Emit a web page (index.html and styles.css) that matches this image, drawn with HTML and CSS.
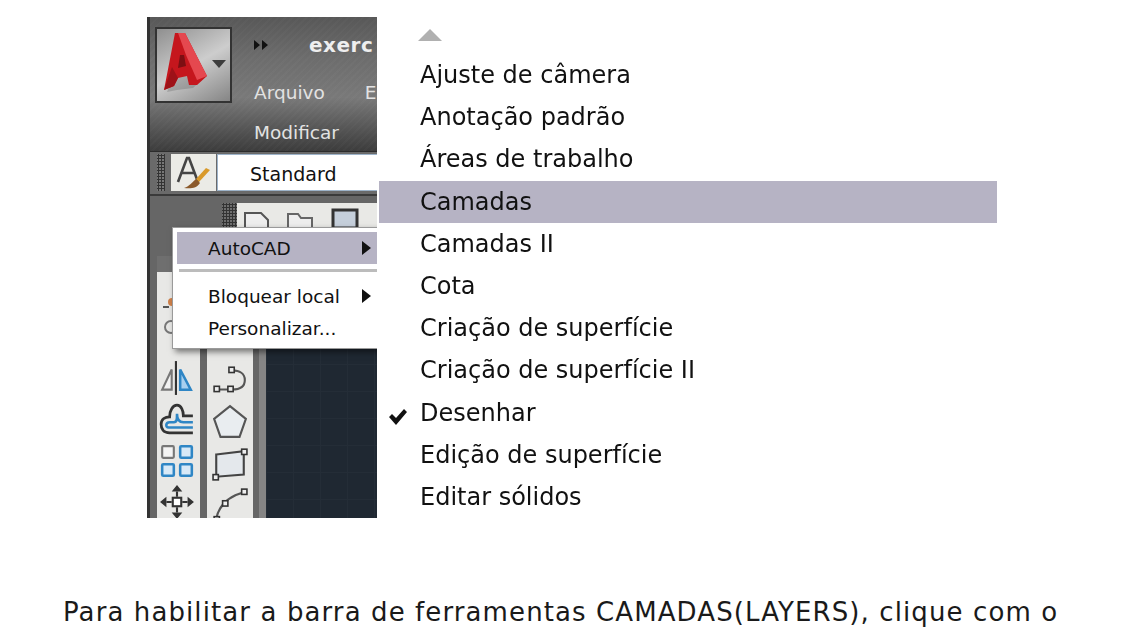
FILE: index.html
```html
<!DOCTYPE html>
<html>
<head>
    <title>Camadas</title>
    <link rel="stylesheet" href="styles.css">
</head>
<body>
    <div class="figure">
        <div class="cad">
            <div class="cad-head">
                <div class="logo-btn">
                    <svg width="73" height="72" viewBox="0 0 73 72">
                        <path d="M10 63 L22 34 L46 50 L36 59 L20 61 Z" fill="#000" opacity=".15"/>
                        <path d="M18 4 L28 4 L50 47 L40 56 L32 56 L30 47 L21 49 L17 57 L7 61 Z" fill="#c5161d"/>
                        <path d="M21 4 L28 4 L50 47 L40 51 L29 26 Z" fill="#e5484f"/>
                        <path d="M7 61 L17 57 L21 49 L15 38 Z" fill="#9e1218"/>
                        <path d="M23 26 L27 26 L29 37 L21 39 Z" fill="#7d0f13"/>
                        <path d="M55 31 L69 31 L62 39 Z" fill="#3d3d3d"/>
                    </svg>
                </div>
                <div class="head-right">
                    <div class="title-row">
                        <svg class="ffwd" width="14" height="10" viewBox="0 0 14 10"><path d="M0 0 L6 5 L0 10 Z M8 0 L14 5 L8 10 Z" fill="#111"/></svg>
                        <span class="doc-name">exerc</span>
                    </div>
                    <div class="head-menu">
                        <span class="head-item">Arquivo</span>
                        <span class="head-item">E</span>
                    </div>
                    <div class="head-menu"><span class="head-item">Modificar</span></div>
                </div>
            </div>

            <div class="style-bar">
                <div class="grip"></div>
                <div class="style-icon">
                    <svg width="38" height="36" viewBox="0 0 38 36">
                        <path d="M3 27 L12 3 L14 3 L23 27 M7 18 L19 18" fill="none" stroke="#444" stroke-width="2.6"/>
                        <path d="M31 13 L35 15 L24 27 L21 24 Z" fill="#d99a2b"/>
                        <path d="M21 24 L25 28 C22 33 16 34 9 33 C15 31 17 27 21 24 Z" fill="#8b5a2b"/>
                    </svg>
                </div>
                <div class="style-combo">Standard</div>
            </div>

            <div class="tool-area">
                <div class="top-toolbar">
                    <div class="grip grip-small"></div>
                    <svg width="140" height="26" viewBox="0 0 140 26">
                        <path d="M8 24 V10 H24 L31 17 V24" fill="#eee" stroke="#555" stroke-width="2"/>
                        <path d="M51 24 V11 H61 L64 15 H75 V24" fill="#eee" stroke="#666" stroke-width="2"/>
                        <rect x="96" y="7" width="24" height="18" fill="#c5cfdb" stroke="#333" stroke-width="3"/>
                    </svg>
                </div>
                <div class="tool-cols">
                    <div class="tool-col col-a">
                        <div class="grip-head"></div>
                        <div class="peek-icons">
                            <svg width="14" height="70" viewBox="0 0 14 70">
                                <path d="M1 35 H7" stroke="#555" stroke-width="2"/>
                                <circle cx="10" cy="30" r="4" fill="#d0814a"/>
                                <circle cx="9" cy="55" r="6" fill="none" stroke="#777" stroke-width="2"/>
                            </svg>
                        </div>
                        <div class="tool-icon">
                            <svg viewBox="0 0 34 34">
                                <path d="M16 1 V33" stroke="#333" stroke-width="2"/>
                                <path d="M12 9 V28 H3 Z" fill="#f2f2f2" stroke="#777" stroke-width="2"/>
                                <path d="M20 9 V28 H30 Z" fill="#a9d0ef" stroke="#2f86c5" stroke-width="2.4"/>
                            </svg>
                        </div>
                        <div class="tool-icon">
                            <svg viewBox="0 0 34 34">
                                <path d="M32 30 H10 C4 30 2 26 2 22 C2 17 6 15 10 15 C10 9 13 4 17 4 C21 4 23 9 23 14 H32" fill="none" stroke="#333" stroke-width="2.6"/>
                                <path d="M32 25 H9 C6 25 6 20 10 20 H14 C17 20 17 17 17 12 C17 17 19 20 23 20 H32" fill="none" stroke="#2f86c5" stroke-width="2.4"/>
                            </svg>
                        </div>
                        <div class="tool-icon">
                            <svg viewBox="0 0 34 34">
                                <rect x="3" y="3" width="11" height="11" rx="1" fill="#f4f4f4" stroke="#777" stroke-width="2"/>
                                <rect x="20" y="3" width="11" height="11" rx="1" fill="#d8e9f7" stroke="#2f86c5" stroke-width="2.4"/>
                                <rect x="3" y="20" width="11" height="11" rx="1" fill="#d8e9f7" stroke="#2f86c5" stroke-width="2.4"/>
                                <rect x="20" y="20" width="11" height="11" rx="1" fill="#d8e9f7" stroke="#2f86c5" stroke-width="2.4"/>
                            </svg>
                        </div>
                        <div class="tool-icon">
                            <svg viewBox="0 0 34 34">
                                <rect x="13" y="13" width="8" height="8" fill="#fff" stroke="#333" stroke-width="2"/>
                                <path d="M17 1 L22 7 H12 Z M17 33 L22 27 H12 Z M1 17 L7 12 V22 Z M33 17 L27 12 V22 Z" fill="#333"/>
                                <path d="M7 17 H12 M22 17 H27 M17 7 V12 M17 22 V27" stroke="#333" stroke-width="2"/>
                            </svg>
                        </div>
                    </div>
                    <div class="tool-col col-b">
                        <div class="tool-icon">
                            <svg viewBox="0 0 34 34">
                                <path d="M5 25 H19 C28 25 31 21 31 16 C31 10 26 7 19 7" fill="none" stroke="#555" stroke-width="2"/>
                                <rect x="2" y="22" width="5" height="5" fill="#eee" stroke="#333" stroke-width="1.5"/>
                                <rect x="15" y="22" width="5" height="5" fill="#eee" stroke="#333" stroke-width="1.5"/>
                                <rect x="16" y="4" width="5" height="5" fill="#eee" stroke="#333" stroke-width="1.5"/>
                            </svg>
                        </div>
                        <div class="tool-icon">
                            <svg viewBox="0 0 34 34">
                                <path d="M17 2 L32 14 L26 31 H8 L2 14 Z" fill="#e9edf0" stroke="#555" stroke-width="2"/>
                            </svg>
                        </div>
                        <div class="tool-icon">
                            <svg viewBox="0 0 34 34">
                                <path d="M4 8 L30 5 V27 L4 29 Z" fill="#e4e8ec" stroke="#444" stroke-width="2"/>
                                <rect x="28" y="3" width="5" height="5" fill="#eee" stroke="#333" stroke-width="1.5"/>
                                <rect x="1" y="27" width="5" height="5" fill="#eee" stroke="#333" stroke-width="1.5"/>
                            </svg>
                        </div>
                        <div class="tool-icon">
                            <svg viewBox="0 0 34 34">
                                <path d="M4 30 C6 20 12 10 30 5" fill="none" stroke="#555" stroke-width="2"/>
                                <rect x="2" y="28" width="5" height="5" fill="#eee" stroke="#333" stroke-width="1.5"/>
                                <rect x="10" y="13" width="5" height="5" fill="#eee" stroke="#333" stroke-width="1.5"/>
                                <rect x="28" y="2" width="5" height="5" fill="#eee" stroke="#333" stroke-width="1.5"/>
                            </svg>
                        </div>
                    </div>
                    <div class="canvas"></div>
                </div>
            </div>

            <div class="context-menu">
                <div class="ctx-item active"><span>AutoCAD</span><i class="arrow"></i></div>
                <div class="ctx-sep"></div>
                <div class="ctx-item"><span>Bloquear local</span><i class="arrow"></i></div>
                <div class="ctx-item"><span>Personalizar...</span></div>
            </div>
        </div>

        <div class="toolbar-list">
            <div class="scroll-up"></div>
            <div class="list-item">Ajuste de câmera</div>
            <div class="list-item">Anotação padrão</div>
            <div class="list-item">Áreas de trabalho</div>
            <div class="list-item selected">Camadas</div>
            <div class="list-item">Camadas II</div>
            <div class="list-item">Cota</div>
            <div class="list-item">Criação de superfície</div>
            <div class="list-item">Criação de superfície II</div>
            <div class="list-item">
                <svg class="check" width="20" height="18" viewBox="0 0 20 18"><path d="M1 9 L4 6 L8 10 L16 1 L19 4 L8 17 Z" fill="#111"/></svg>
                Desenhar
            </div>
            <div class="list-item">Edição de superfície</div>
            <div class="list-item">Editar sólidos</div>
        </div>
    </div>

    <p class="caption">Para habilitar a barra de ferramentas CAMADAS(LAYERS), clique com o</p>
</body>
</html>
```

FILE: styles.css
```css
html, body {
    margin: 0;
    padding: 0;
    height: 630px;
    overflow: hidden;
    background-color: #FFF;
}

body {
    font-family: "DejaVu Sans", Verdana, sans-serif;
    color: #111;
}

.figure {
    display: flex;
    padding: 17px 0 0 147px;
    height: 501px;
    filter: blur(.4px);
}

.cad {
    position: relative;
    width: 230px;
    height: 501px;
    flex-shrink: 0;
    overflow: hidden;
    background-color: #666;
    border-left: 3px solid #333;
    box-sizing: border-box;
}

.cad-head {
    display: flex;
    height: 135px;
    padding: 10px 0 0 5px;
    box-sizing: border-box;
    background:
        repeating-linear-gradient(135deg, rgba(255, 255, 255, .02) 0 2px, transparent 2px 5px),
        linear-gradient(#585858, #6c6c6c 30%, #797979 60%, #3c3c3c);
    border-bottom: 1px solid #2c2c2c;
}

.logo-btn {
    width: 77px;
    height: 76px;
    box-sizing: border-box;
    border: 2px solid #333;
    background: linear-gradient(150deg, #8f8f8f, #cdcdcd 50%, #858585);
}

.head-right {
    margin-left: 22px;
    white-space: nowrap;
    color: #e2e2e2;
    font-size: 18.5px;
}

.title-row {
    display: flex;
    align-items: center;
    height: 36px;
    margin-bottom: 9px;
}

.ffwd {
    margin-right: 41px;
}

.doc-name {
    font-weight: bold;
    font-size: 20px;
    letter-spacing: .5px;
    color: #eee;
}

.head-menu {
    display: flex;
    gap: 40px;
    height: 40px;
    align-items: center;
}

.style-bar {
    display: flex;
    height: 44px;
    padding: 2px 0 3px 7px;
    box-sizing: border-box;
    background-color: #6a6a6a;
    border-bottom: 2px solid #3a3a3a;
}

.grip {
    width: 8px;
    background-image: radial-gradient(#333 1px, transparent 1.4px);
    background-size: 3px 3px;
    background-color: #777;
}

.style-icon {
    display: flex;
    align-items: center;
    justify-content: center;
    width: 45px;
    margin-left: 6px;
    background-color: #ebebe6;
}

.style-combo {
    flex: 1;
    margin-left: 1px;
    padding-left: 32px;
    background-color: #FFF;
    border: 1px solid #9db3c9;
    border-right: none;
    font-size: 19px;
    line-height: 38px;
}

.tool-area {
    height: 322px;
    display: flex;
    flex-direction: column;
}

.top-toolbar {
    display: flex;
    height: 53px;
    margin: 7px 0 0 72px;
    background-color: #e9e9e6;
    flex-shrink: 0;
}

.grip-small {
    width: 15px;
    background-color: #6f6f6f;
}

.tool-cols {
    display: flex;
    flex: 1;
    min-height: 0;
}

.tool-col {
    background-color: #e8e8e6;
}

.col-a {
    width: 43px;
    margin-left: 7px;
}

.col-a .tool-icon {
    padding-right: 3px;
}

.col-b {
    width: 46px;
    margin-left: 7px;
    padding-top: 104px;
}

.grip-head {
    height: 16px;
    background-color: #6f6f6f;
}

.peek-icons {
    height: 85px;
    padding-left: 5px;
}

.tool-icon {
    display: flex;
    align-items: center;
    justify-content: center;
    height: 41.5px;
}

.tool-icon svg {
    width: 36px;
    height: 36px;
}

.canvas {
    flex: 1;
    margin-left: 6px;
    border-left: 7px solid #858585;
    background-color: #1f2832;
    background-image:
        linear-gradient(#242d37 1px, transparent 1px),
        linear-gradient(90deg, #242d37 1px, transparent 1px);
    background-size: 27px 27px;
}

/* menu over the toolbars */
.context-menu {
    position: absolute;
    left: 22px;
    top: 210px;
    width: 210px;
    height: 122px;
    box-sizing: border-box;
    padding: 4px 0 0 4px;
    background-color: #FFF;
    border: 1px solid #9a9a9a;
    box-shadow: 3px 3px 6px rgba(0, 0, 0, .5);
    font-size: 18.5px;
}

.ctx-item {
    display: flex;
    align-items: center;
    height: 32px;
    padding-left: 31px;
    position: relative;
}

.ctx-item.active {
    background-color: #b6b3c4;
}

.ctx-sep {
    height: 3px;
    margin: 5px 0 8px 2px;
    background-color: #bcbcbc;
}

.arrow {
    position: absolute;
    left: 185px;
    top: 9px;
    border-left: 9px solid #111;
    border-top: 7px solid transparent;
    border-bottom: 7px solid transparent;
}

.toolbar-list {
    width: 618px;
    margin-left: 2px;
    font-size: 24px;
}

.scroll-up {
    width: 0;
    margin: 12px 0 0 39px;
    border-left: 12px solid transparent;
    border-right: 12px solid transparent;
    border-bottom: 12px solid #b0b0b0;
}

.list-item {
    position: relative;
    height: 42.2px;
    line-height: 42.2px;
    padding-left: 41px;
    white-space: nowrap;
}

.list-item:nth-child(2) {
    margin-top: 13px;
}

.list-item.selected {
    background-color: #b6b3c4;
}

.check {
    position: absolute;
    left: 9px;
    top: 16px;
}

.caption {
    margin: 0;
    padding: 74px 0 0 63px;
    font-size: 26px;
    line-height: 40px;
    letter-spacing: 1.1px;
    white-space: nowrap;
    color: #1a1a1a;
}
```
